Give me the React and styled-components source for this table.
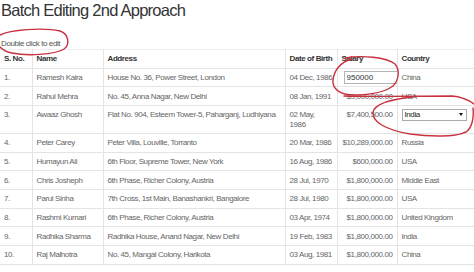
import React from "react";
import styled, { createGlobalStyle } from "styled-components";

const GlobalStyle = createGlobalStyle`
  html, body {
    margin: 0;
    padding: 0;
    background: #fff;
    overflow: hidden;
  }
  body {
    font-family: "Liberation Sans", Arial, sans-serif;
    color: #333;
  }
`;

const Page = styled.div`
  position: relative;
  width: 474px;
  height: 272px;
  overflow: hidden;
`;

const Title = styled.h1`
  margin: 0;
  font-size: 16.5px;
  line-height: 20px;
  letter-spacing: -0.75px;
  font-weight: normal;
  color: #333;
  padding-left: 1px;
`;

const Hint = styled.p`
  margin: 18px 0 0 0;
  font-size: 8px;
  line-height: 11px;
  letter-spacing: -0.4px;
  color: #555;
  padding-left: 1px;
`;

const Table = styled.table`
  border-collapse: collapse;
  table-layout: fixed;
  width: 483px;
  font-size: 8px;
  letter-spacing: -0.4px;
`;

const HeadCell = styled.th`
  text-align: left;
  font-weight: bold;
  color: #333;
  white-space: nowrap;
  padding: 4.2px 4px;
  line-height: 9.3px;
  border: 1px solid #e4e4e4;
  border-top-color: #eee;
  &:first-child { border-left: none; }
`;

const Cell = styled.td`
  text-align: ${(p) => p.$align || "left"};
  vertical-align: top;
  white-space: pre;
  color: #666;
  padding: 4.2px 4px;
  line-height: 9.3px;
  border: 1px solid #e4e4e4;
  &:first-child { border-left: none; }
`;

const SalaryInput = styled.input`
  box-sizing: border-box;
  display: block;
  width: 54px;
  height: 13px;
  margin: -2px -4px -2px 2px;
  padding: 0 2px;
  border: 1px solid #b5b5b5;
  font: inherit;
  color: #333;
  background: #fff;
  outline: none;
`;

const Select = styled.div`
  box-sizing: border-box;
  display: flex;
  align-items: center;
  justify-content: space-between;
  width: 65px;
  height: 11.5px;
  margin: -1px 0;
  padding: 0 3px 0 2px;
  border: 1px solid #aaa;
  color: #222;
  background: #fff;
`;

const Arrow = styled.span`
  width: 0;
  height: 0;
  border-left: 2.5px solid transparent;
  border-right: 2.5px solid transparent;
  border-top: 3px solid #111;
`;

const Marks = styled.svg`
  position: absolute;
  left: 0;
  top: 0;
  pointer-events: none;
`;

const rows = [
  ["1.", "Ramesh Kalra", "House No. 36, Power Street, London", "04 Dec, 1986", "input", "China"],
  ["2.", "Rahul Mehra", "No. 45, Anna Nagar, New Delhi", "08 Jan, 1991", "$9,000,000.00", "USA"],
  ["3.", "Awaaz Ghosh", "Flat No. 904, Esteem Tower-5, Paharganj, Ludhiyana", "02 May,\n1986", "$7,400,500.00", "select"],
  ["4.", "Peter Carey", "Peter Villa, Louville, Torranto", "20 Mar, 1986", "$10,289,000.00", "Russia"],
  ["5.", "Humayun Ali", "6th Floor, Supreme Tower, New York", "16 Aug, 1986", "$600,000.00", "USA"],
  ["6.", "Chris Josheph", "6th Phase, Richer Colony, Austria", "28 Jul, 1970", "$1,800,000.00", "Middle East"],
  ["7.", "Parul Sinha", "7th Cross, 1st Main, Banashankri, Bangalore", "28 Jul, 1980", "$1,800,000.00", "USA"],
  ["8.", "Rashmi Kumari", "6th Phase, Richer Colony, Austria", "03 Apr, 1974", "$1,800,000.00", "United Kingdom"],
  ["9.", "Radhika Sharma", "Radhika House, Anand Nagar, New Delhi", "19 Feb, 1983", "$1,800,000.00", "India"],
  ["10.", "Raj Malhotra", "No. 45, Mangal Colony, Harikota", "03 Aug, 1981", "$1,800,000.00", "China"],
];

function App() {
  return (
    <Page>
      <GlobalStyle />
      <Title>Batch Editing 2nd Approach</Title>
      <Hint>Double click to edit</Hint>
      <Table>
        <colgroup>
          <col style={{ width: 32 }} />
          <col style={{ width: 71 }} />
          <col style={{ width: 182 }} />
          <col style={{ width: 52 }} />
          <col style={{ width: 60 }} />
          <col style={{ width: 86 }} />
        </colgroup>
        <thead>
          <tr>
            <HeadCell>S. No.</HeadCell>
            <HeadCell>Name</HeadCell>
            <HeadCell>Address</HeadCell>
            <HeadCell>Date of Birth</HeadCell>
            <HeadCell>Salary</HeadCell>
            <HeadCell>Country</HeadCell>
          </tr>
        </thead>
        <tbody>
          {rows.map((r) => (
            <tr key={r[0]}>
              <Cell>{r[0]}</Cell>
              <Cell>{r[1]}</Cell>
              <Cell>{r[2]}</Cell>
              <Cell>{r[3]}</Cell>
              <Cell $align="right">
                {r[4] === "input" ? <SalaryInput defaultValue="950000" /> : r[4]}
              </Cell>
              <Cell>
                {r[5] === "select" ? (
                  <Select>
                    India
                    <Arrow />
                  </Select>
                ) : (
                  r[5]
                )}
              </Cell>
            </tr>
          ))}
        </tbody>
      </Table>

      {/* red pen marks drawn over the screenshot */}
      <Marks width="474" height="272" viewBox="0 0 474 272" fill="none" stroke="#c8323e" strokeWidth="1.4" strokeLinecap="round">
        <path d="M0,35 C10,30 42,27 60,31 C69,34 70,45 64,49 C54,55 26,56 12,53 C6,52 2,49 0,47" />
        <path d="M345,58 C362,55 386,57 395,64 C400,70 399,80 393,86 C386,91 372,95 354,95 C340,95 332,89 333,80 C334,71 340,62 352,59" />
        <path d="M344,96 C372,97 410,96 452,96 C462,97 469,100 474,104" />
        <path d="M412,97 C394,99 375,103 373,112 C372,122 386,130 410,134 C432,137 455,137 466,132 C472,128 474,118 473,108" />
      </Marks>
    </Page>
  );
}

export default App;
